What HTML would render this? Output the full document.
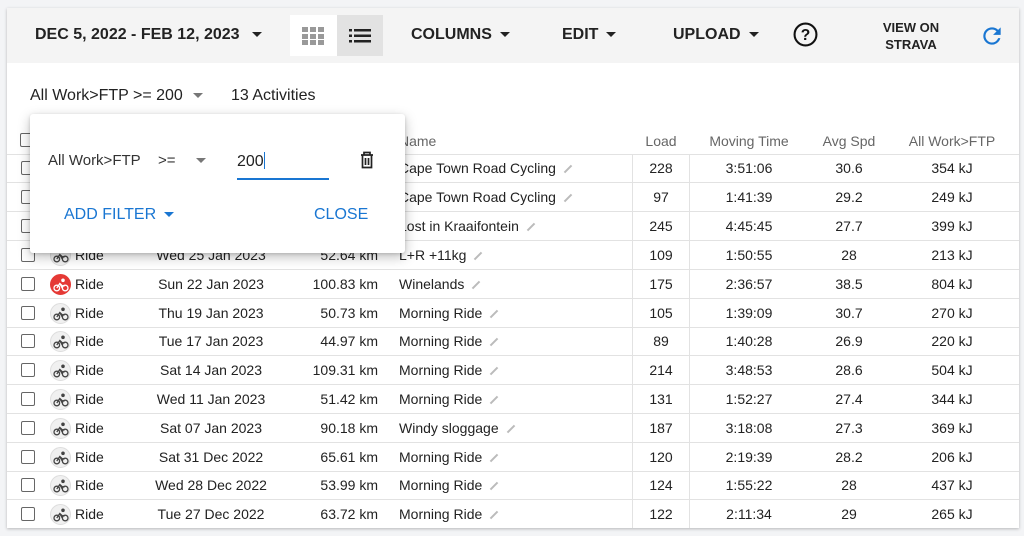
<!DOCTYPE html>
<html><head><meta charset="utf-8"><style>
*{margin:0;padding:0;box-sizing:border-box}
body{width:1024px;height:536px;background:#f3f4f6;font-family:"Liberation Sans",Arial,sans-serif;position:relative;overflow:hidden;color:#222}
.card{position:absolute;left:7px;top:8px;width:1012px;height:520px;background:#fff;box-shadow:0 1px 3px rgba(0,0,0,.25)}
.tb{position:absolute;left:7px;top:8px;width:1012px;height:55px;background:#f4f4f4}
.t{position:absolute;font-size:16px;font-weight:bold;color:#222;white-space:nowrap}
.car{display:inline-block;width:0;height:0;border-left:5px solid transparent;border-right:5px solid transparent;border-top:5px solid #222;vertical-align:middle;margin-left:8px}
.a{position:absolute;font-size:14px;white-space:nowrap}
.row{position:absolute;left:7px;width:1012px;height:29px;border-bottom:1px solid #e2e2e2}
.row span{position:absolute;top:6px;font-size:14px;white-space:nowrap;color:#222}
.cb{position:absolute;left:14px;top:7px;width:14px;height:14px;border:1.5px solid #666;border-radius:2px}
.ic{position:absolute;left:43px;top:4px;width:21px;height:21px;border-radius:50%;background:#f0f0f0;border:1px solid #ddd}
.ic svg{position:absolute;left:2px;top:3px}
.ic.red{background:#e53935;border-color:#e53935}
.pen{display:inline-block;width:10px;height:2px;background:#bbb;transform:rotate(-45deg);margin-left:7px;vertical-align:middle}
.c{text-align:center;transform:translateX(-50%)}
.r{text-align:right;transform:translateX(-100%)}
.vl{position:absolute;top:154px;width:1px;height:374px;background:#e2e2e2}
.h{position:absolute;top:133px;font-size:14px;color:#666;white-space:nowrap}
</style></head><body>
<svg width="0" height="0" style="position:absolute"><defs><symbol id="bk" viewBox="0 0 16 14"><g fill="none" stroke-width="1.3"><circle cx="3.8" cy="10" r="2.8"/><circle cx="12.2" cy="10" r="2.8"/><path d="M3.8 10l3-4.5 2.6 2.3h2.3M6.8 5.5l2.5 4.5"/></g><circle cx="10" cy="2.3" r="1.3"/></symbol></defs></svg>
<div class="card"></div>
<div class="tb"></div>
<div class="t" style="left:35px;top:26px">DEC 5, 2022 - FEB 12, 2023<span class="car" style="margin-left:12px"></span></div>
<div style="position:absolute;left:290px;top:15px;width:47px;height:41px;background:#fff"></div>
<div style="position:absolute;left:337px;top:15px;width:46px;height:41px;background:#e2e2e2"></div>
<svg style="position:absolute;left:302px;top:27px" width="22" height="18" viewBox="0 0 22 18"><g fill="#999"><rect x="0" y="0" width="6" height="5"/><rect x="8" y="0" width="6" height="5"/><rect x="16" y="0" width="6" height="5"/><rect x="0" y="7" width="6" height="5"/><rect x="8" y="7" width="6" height="5"/><rect x="16" y="7" width="6" height="5"/><rect x="0" y="13" width="6" height="5"/><rect x="8" y="13" width="6" height="5"/><rect x="16" y="13" width="6" height="5"/></g></svg>
<svg style="position:absolute;left:349px;top:29px" width="22" height="14" viewBox="0 0 22 14"><g fill="#222"><rect x="0" y="0" width="3" height="2.5"/><rect x="5" y="0" width="17" height="2.5"/><rect x="0" y="5.5" width="3" height="2.5"/><rect x="5" y="5.5" width="17" height="2.5"/><rect x="0" y="11" width="3" height="2.5"/><rect x="5" y="11" width="17" height="2.5"/></g></svg>
<div class="t" style="left:411px;top:26px">COLUMNS<span class="car"></span></div>
<div class="t" style="left:562px;top:26px">EDIT<span class="car"></span></div>
<div class="t" style="left:673px;top:26px">UPLOAD<span class="car"></span></div>
<svg style="position:absolute;left:793px;top:22px" width="25" height="25" viewBox="0 0 24 24"><circle cx="12" cy="12" r="10.5" fill="none" stroke="#111" stroke-width="2"/><text x="12" y="17.5" text-anchor="middle" font-family="Liberation Sans" font-weight="bold" font-size="15" fill="#111">?</text></svg>
<div class="t" style="left:911px;top:19px;font-size:13px;text-align:center;line-height:17px;transform:translateX(-50%)">VIEW ON<br>STRAVA</div>
<svg style="position:absolute;left:979px;top:23px" width="26" height="26" viewBox="0 0 24 24"><path fill="#1976d2" d="M17.65 6.35A7.96 7.96 0 0 0 12 4a8 8 0 1 0 7.73 10h-2.08A6 6 0 1 1 12 6c1.66 0 3.14.69 4.22 1.78L13 11h7V4l-2.35 2.35z"/></svg>
<div class="a" style="left:30px;top:87px;font-size:16px;font-weight:500">All Work&gt;FTP &gt;= 200<span class="car" style="border-top-color:#777;margin-left:10px"></span></div>
<div class="a" style="left:231px;top:87px;font-size:16px">13 Activities</div>
<div class="h" style="left:399px">Name</div>
<div class="h c" style="left:661px">Load</div>
<div class="h c" style="left:749px">Moving Time</div>
<div class="h c" style="left:849px">Avg Spd</div>
<div class="h c" style="left:952px">All Work&gt;FTP</div>
<div style="position:absolute;left:20px;top:133px;width:14px;height:14px;border:1.5px solid #666;border-radius:2px"></div>
<div style="position:absolute;left:7px;top:154px;width:1012px;height:1px;background:#e2e2e2"></div>
<div class="vl" style="left:632px"></div><div class="vl" style="left:689px"></div>

<div class="row" style="top:154px"><div class="cb"></div><div class="ic"><svg width="16" height="14" stroke="#444" fill="#444"><use href="#bk"/></svg></div><span style="left:68px">Ride</span><span class="c" style="left:204px">Sat 04 Feb 2023</span><span class="r" style="left:371px">120.11 km</span><span style="left:392px">Cape Town Road Cycling<i class="pen"></i></span><span class="c" style="left:654px">228</span><span class="c" style="left:742px">3:51:06</span><span class="c" style="left:842px">30.6</span><span class="c" style="left:945px">354 kJ</span></div>
<div class="row" style="top:183px"><div class="cb"></div><div class="ic"><svg width="16" height="14" stroke="#444" fill="#444"><use href="#bk"/></svg></div><span style="left:68px">Ride</span><span class="c" style="left:204px">Sat 28 Jan 2023</span><span class="r" style="left:371px">49.42 km</span><span style="left:392px">Cape Town Road Cycling<i class="pen"></i></span><span class="c" style="left:654px">97</span><span class="c" style="left:742px">1:41:39</span><span class="c" style="left:842px">29.2</span><span class="c" style="left:945px">249 kJ</span></div>
<div class="row" style="top:212px"><div class="cb"></div><div class="ic"><svg width="16" height="14" stroke="#444" fill="#444"><use href="#bk"/></svg></div><span style="left:68px">Ride</span><span class="c" style="left:204px">Fri 27 Jan 2023</span><span class="r" style="left:371px">132.02 km</span><span style="left:392px">Lost in Kraaifontein<i class="pen"></i></span><span class="c" style="left:654px">245</span><span class="c" style="left:742px">4:45:45</span><span class="c" style="left:842px">27.7</span><span class="c" style="left:945px">399 kJ</span></div>
<div class="row" style="top:241px"><div class="cb"></div><div class="ic"><svg width="16" height="14" stroke="#444" fill="#444"><use href="#bk"/></svg></div><span style="left:68px">Ride</span><span class="c" style="left:204px">Wed 25 Jan 2023</span><span class="r" style="left:371px">52.64 km</span><span style="left:392px">L+R +11kg<i class="pen"></i></span><span class="c" style="left:654px">109</span><span class="c" style="left:742px">1:50:55</span><span class="c" style="left:842px">28</span><span class="c" style="left:945px">213 kJ</span></div>
<div class="row" style="top:270px"><div class="cb"></div><div class="ic red"><svg width="16" height="14" stroke="#fff" fill="#fff"><use href="#bk"/></svg></div><span style="left:68px">Ride</span><span class="c" style="left:204px">Sun 22 Jan 2023</span><span class="r" style="left:371px">100.83 km</span><span style="left:392px">Winelands<i class="pen"></i></span><span class="c" style="left:654px">175</span><span class="c" style="left:742px">2:36:57</span><span class="c" style="left:842px">38.5</span><span class="c" style="left:945px">804 kJ</span></div>
<div class="row" style="top:299px"><div class="cb"></div><div class="ic"><svg width="16" height="14" stroke="#444" fill="#444"><use href="#bk"/></svg></div><span style="left:68px">Ride</span><span class="c" style="left:204px">Thu 19 Jan 2023</span><span class="r" style="left:371px">50.73 km</span><span style="left:392px">Morning Ride<i class="pen"></i></span><span class="c" style="left:654px">105</span><span class="c" style="left:742px">1:39:09</span><span class="c" style="left:842px">30.7</span><span class="c" style="left:945px">270 kJ</span></div>
<div class="row" style="top:327px"><div class="cb"></div><div class="ic"><svg width="16" height="14" stroke="#444" fill="#444"><use href="#bk"/></svg></div><span style="left:68px">Ride</span><span class="c" style="left:204px">Tue 17 Jan 2023</span><span class="r" style="left:371px">44.97 km</span><span style="left:392px">Morning Ride<i class="pen"></i></span><span class="c" style="left:654px">89</span><span class="c" style="left:742px">1:40:28</span><span class="c" style="left:842px">26.9</span><span class="c" style="left:945px">220 kJ</span></div>
<div class="row" style="top:356px"><div class="cb"></div><div class="ic"><svg width="16" height="14" stroke="#444" fill="#444"><use href="#bk"/></svg></div><span style="left:68px">Ride</span><span class="c" style="left:204px">Sat 14 Jan 2023</span><span class="r" style="left:371px">109.31 km</span><span style="left:392px">Morning Ride<i class="pen"></i></span><span class="c" style="left:654px">214</span><span class="c" style="left:742px">3:48:53</span><span class="c" style="left:842px">28.6</span><span class="c" style="left:945px">504 kJ</span></div>
<div class="row" style="top:385px"><div class="cb"></div><div class="ic"><svg width="16" height="14" stroke="#444" fill="#444"><use href="#bk"/></svg></div><span style="left:68px">Ride</span><span class="c" style="left:204px">Wed 11 Jan 2023</span><span class="r" style="left:371px">51.42 km</span><span style="left:392px">Morning Ride<i class="pen"></i></span><span class="c" style="left:654px">131</span><span class="c" style="left:742px">1:52:27</span><span class="c" style="left:842px">27.4</span><span class="c" style="left:945px">344 kJ</span></div>
<div class="row" style="top:414px"><div class="cb"></div><div class="ic"><svg width="16" height="14" stroke="#444" fill="#444"><use href="#bk"/></svg></div><span style="left:68px">Ride</span><span class="c" style="left:204px">Sat 07 Jan 2023</span><span class="r" style="left:371px">90.18 km</span><span style="left:392px">Windy sloggage<i class="pen"></i></span><span class="c" style="left:654px">187</span><span class="c" style="left:742px">3:18:08</span><span class="c" style="left:842px">27.3</span><span class="c" style="left:945px">369 kJ</span></div>
<div class="row" style="top:443px"><div class="cb"></div><div class="ic"><svg width="16" height="14" stroke="#444" fill="#444"><use href="#bk"/></svg></div><span style="left:68px">Ride</span><span class="c" style="left:204px">Sat 31 Dec 2022</span><span class="r" style="left:371px">65.61 km</span><span style="left:392px">Morning Ride<i class="pen"></i></span><span class="c" style="left:654px">120</span><span class="c" style="left:742px">2:19:39</span><span class="c" style="left:842px">28.2</span><span class="c" style="left:945px">206 kJ</span></div>
<div class="row" style="top:471px"><div class="cb"></div><div class="ic"><svg width="16" height="14" stroke="#444" fill="#444"><use href="#bk"/></svg></div><span style="left:68px">Ride</span><span class="c" style="left:204px">Wed 28 Dec 2022</span><span class="r" style="left:371px">53.99 km</span><span style="left:392px">Morning Ride<i class="pen"></i></span><span class="c" style="left:654px">124</span><span class="c" style="left:742px">1:55:22</span><span class="c" style="left:842px">28</span><span class="c" style="left:945px">437 kJ</span></div>
<div class="row" style="top:500px;border-bottom:none"><div class="cb"></div><div class="ic"><svg width="16" height="14" stroke="#444" fill="#444"><use href="#bk"/></svg></div><span style="left:68px">Ride</span><span class="c" style="left:204px">Tue 27 Dec 2022</span><span class="r" style="left:371px">63.72 km</span><span style="left:392px">Morning Ride<i class="pen"></i></span><span class="c" style="left:654px">122</span><span class="c" style="left:742px">2:11:34</span><span class="c" style="left:842px">29</span><span class="c" style="left:945px">265 kJ</span></div>

<div style="position:absolute;left:30px;top:114px;width:375px;height:139px;background:#fff;border-radius:3px;box-shadow:0 4px 12px rgba(0,0,0,.25),0 1px 3px rgba(0,0,0,.15)">
 <div class="a" style="left:18px;top:38px;font-size:15px;color:#333">All Work&gt;FTP</div>
 <div class="a" style="left:128px;top:38px;font-size:15px;color:#333">&gt;=</div>
 <span class="car" style="position:absolute;left:166px;top:44px;border-top-color:#777;margin:0"></span>
 <div class="a" style="left:207px;top:38px;font-size:16px;color:#222">200<span style="display:inline-block;width:1.5px;height:17px;background:#1976d2;vertical-align:-3px"></span></div>
 <div style="position:absolute;left:207px;top:64px;width:92px;height:2px;background:#1976d2"></div>
 <svg style="position:absolute;left:329px;top:37px" width="16" height="18" viewBox="0 0 16 18"><path d="M2 4h12M5 4V1.5h6V4M3.5 4v12.5h9V4M6.5 7v7M9.5 7v7" fill="none" stroke="#222" stroke-width="1.7"/></svg>
 <div class="a" style="left:34px;top:92px;font-size:16px;color:#1976d2">ADD FILTER<span class="car" style="border-top-color:#1976d2"></span></div>
 <div class="a" style="left:284px;top:92px;font-size:16px;color:#1976d2">CLOSE</div>
</div>
</body></html>
